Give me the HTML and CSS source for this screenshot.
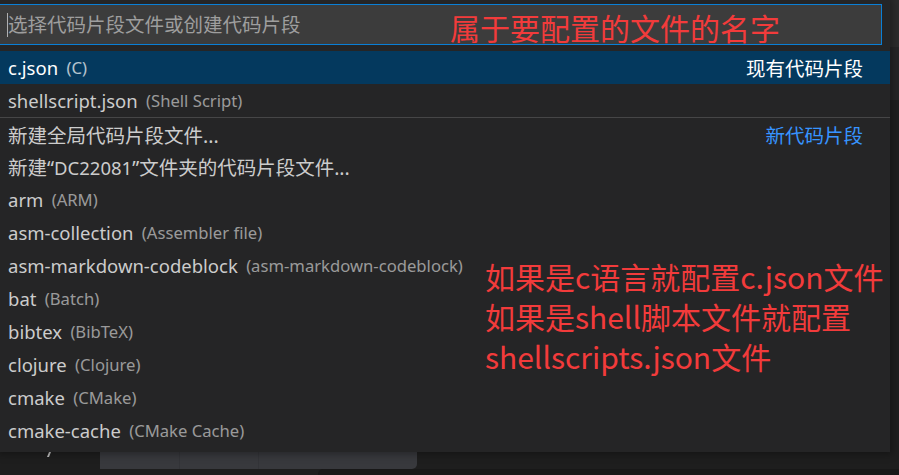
FILE: index.html
```html
<!DOCTYPE html>
<html lang="zh-CN">
<head>
<meta charset="utf-8">
<title>Snippets</title>
<link rel="stylesheet" href="styles.css">
</head>
<body>
<div class="editor">
  <div class="titlebar"></div>
  <div class="tabs"></div>
  <div class="content">
    <div class="widget-row">
      <div class="gutter"><span class="stroke"></span></div>
      <div class="find-bar">
        <span class="seg seg-a"></span>
        <span class="seg seg-b"></span>
      </div>
    </div>
    <div class="dark-block"></div>
  </div>
</div>

<div class="quick-pick">
  <div class="input-wrap">
    <div class="input-box">
      <span class="caret"></span>
      <span class="placeholder">选择代码片段文件或创建代码片段</span>
    </div>
  </div>
  <div class="list">
    <div class="row selected"><span class="label">c.json</span><span class="desc">(C)</span><span class="sep-label">现有代码片段</span></div>
    <div class="row"><span class="label">shellscript.json</span><span class="desc">(Shell Script)</span></div>
    <div class="row separator cjk"><span class="label">新建全局代码片段文件...</span><span class="sep-label blue">新代码片段</span></div>
    <div class="row cjk"><span class="label">新建“<span class="latin">DC22081</span>”文件夹的代码片段文件...</span></div>
    <div class="row"><span class="label">arm</span><span class="desc">(ARM)</span></div>
    <div class="row"><span class="label">asm-collection</span><span class="desc">(Assembler file)</span></div>
    <div class="row"><span class="label">asm-markdown-codeblock</span><span class="desc">(asm-markdown-codeblock)</span></div>
    <div class="row"><span class="label">bat</span><span class="desc">(Batch)</span></div>
    <div class="row"><span class="label">bibtex</span><span class="desc">(BibTeX)</span></div>
    <div class="row"><span class="label">clojure</span><span class="desc">(Clojure)</span></div>
    <div class="row"><span class="label">cmake</span><span class="desc">(CMake)</span></div>
    <div class="row"><span class="label">cmake-cache</span><span class="desc">(CMake Cache)</span></div>
  </div>
</div>

<div class="note note-top">属于要配置的文件的名字</div>
<div class="note note-body">如果是c语言就配置c.json文件<br>如果是shell脚本文件就配置<br>shellscripts.json文件</div>
</body>
</html>
```

FILE: styles.css
```css
* { box-sizing: border-box; }
html, body { margin: 0; padding: 0; }
body {
  width: 899px;
  height: 475px;
  overflow: hidden;
  background: #1e1e1e;
  font-family: "Noto Sans", "Noto Sans CJK SC", sans-serif;
  position: relative;
}

/* background editor */
.editor {
  display: flex;
  flex-direction: column;
  height: 475px;
}
.titlebar { height: 47px; background: #2c2c2c; }
.tabs { height: 53px; background: #252526; }
.content {
  flex: 1;
  background: #1e1e1e;
  display: flex;
  flex-direction: column;
  justify-content: flex-end;
}
.widget-row {
  display: flex;
  height: 17px;
}
.gutter {
  width: 100px;
  padding-left: 48px;
}
.stroke {
  display: block;
  width: 2px;
  height: 5px;
  background: #bdbdbd;
  transform: skewX(-22deg);
}
.find-bar {
  width: 317px;
  height: 17px;
  background: #38393d;
  border-bottom-right-radius: 5px;
  display: flex;
}
.seg { height: 17px; border-right: 1px solid #333438; }
.seg-a { width: 80px; }
.seg-b { width: 79px; }
.dark-block {
  margin-left: 318px;
  height: 6px;
  background: #181818;
  border-top-left-radius: 5px;
}

/* quick pick */
.quick-pick {
  position: absolute;
  left: 0;
  top: 0;
  width: 890px;
  height: 452px;
  background: #252526;
  box-shadow: 0 0 8px 2px rgba(0, 0, 0, 0.36);
}
.input-wrap {
  padding: 4px 8px 0 0;
}
.input-box {
  height: 41px;
  background: #3c3c3c;
  border: 1px solid #0a7fd6;
  border-left: none;
  display: flex;
  align-items: center;
  padding-left: 7px;
}
.caret {
  width: 1px;
  height: 24px;
  background: #b0b0b0;
}
.placeholder {
  color: #9e9e9e;
  font-size: 19.5px;
  line-height: 24px;
}
.list {
  margin-top: 6px;
}
.row {
  height: 33px;
  display: flex;
  align-items: center;
  padding-left: 8px;
  color: #cccccc;
  font-size: 18.5px;
  white-space: nowrap;
}
.row.cjk { font-size: 19.5px; }
.row.cjk .latin { font-size: 18.5px; }
.row.selected {
  background: #04395e;
  color: #ffffff;
}
.row.separator {
  border-top: 1px solid #464647;
}
.desc {
  margin-left: 0.5em;
  font-size: 0.9em;
  opacity: 0.7;
}
.sep-label {
  margin-left: auto;
  padding-right: 27px;
  font-size: 19.5px;
}
.sep-label.blue { color: #3794ff; }

/* annotations overlaid on the screenshot */
.note {
  position: absolute;
  color: #f23b3b;
  font-family: "Noto Sans CJK SC", "Noto Sans", sans-serif;
  white-space: nowrap;
}
.note-top {
  left: 450px;
  top: 9px;
  font-size: 30px;
  line-height: 36px;
}
.note-body {
  left: 485px;
  top: 256px;
  font-size: 30px;
  line-height: 40px;
}
```
